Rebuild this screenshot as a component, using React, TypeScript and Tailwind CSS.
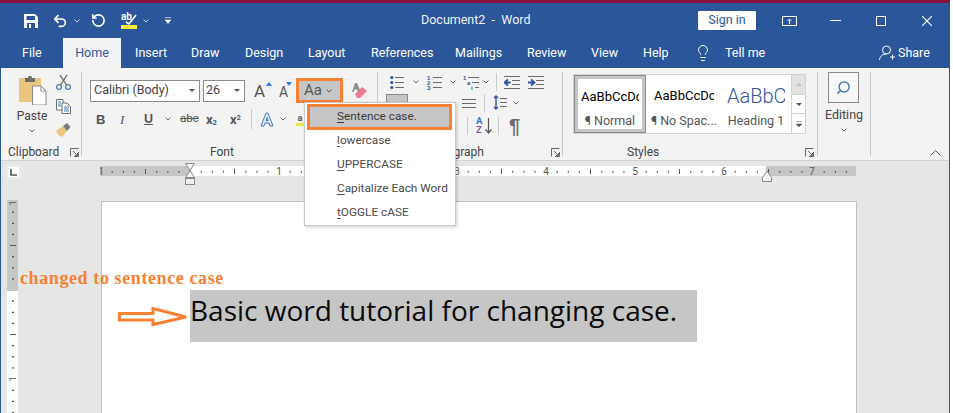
import React from "react";
import { Lightbulb, RotateCcw, Search, Undo2 } from "lucide-react";

const ORANGE = "#f58233";

function Chev({ className = "", color = "#666" }: { className?: string; color?: string }) {
  return (
    <svg width="6" height="4" viewBox="0 0 6 4" className={"shrink-0 " + className}>
      <path d="M0.5 0.5 3 3 5.5 0.5" fill="none" stroke={color} strokeWidth="1" />
    </svg>
  );
}

function Launcher({ className = "" }: { className?: string }) {
  return (
    <svg width="9" height="9" viewBox="0 0 9 9" className={"shrink-0 " + className}>
      <path d="M0.5 8.5V0.5H8.5M8.5 4V8.5H4M3 3 7.5 7.5M5 7.5H7.5V5" fill="none" stroke="#666" strokeWidth="1" />
    </svg>
  );
}

function Sep({ className = "" }: { className?: string }) {
  return <div className={"w-px bg-[#c8c8c8] shrink-0 " + className} />;
}

function GroupSep() {
  return <div className="w-px h-[84px] mt-[4px] bg-[#c6c6c6] shrink-0" />;
}

function Lines({ w = 14, n = 3, gap = 5, color = "#6a6a6a", indents = [] as number[] }) {
  const rows = Array.from({ length: n });
  return (
    <>
      {rows.map((_, i) => (
        <line key={i} x1={indents[i] ?? 0} x2={w} y1={2.5 + i * gap} y2={2.5 + i * gap} stroke={color} strokeWidth="1" />
      ))}
    </>
  );
}

function Bullets() {
  return (
    <svg width="14" height="15" viewBox="0 0 14 15" className="shrink-0">
      <circle cx="1.8" cy="2.5" r="1.6" fill="#2b579a" />
      <circle cx="1.8" cy="7.5" r="1.6" fill="#2b579a" />
      <circle cx="1.8" cy="12.5" r="1.6" fill="#2b579a" />
      <line x1="5" x2="14" y1="2.5" y2="2.5" stroke="#6a6a6a" />
      <line x1="5" x2="14" y1="7.5" y2="7.5" stroke="#6a6a6a" />
      <line x1="5" x2="14" y1="12.5" y2="12.5" stroke="#6a6a6a" />
    </svg>
  );
}

function Numbered() {
  return (
    <svg width="15" height="15" viewBox="0 0 15 15" className="shrink-0">
      <text x="0" y="5" fontSize="6" fontWeight="700" fill="#2b579a" fontFamily="Liberation Sans, sans-serif">1</text>
      <text x="0" y="10" fontSize="6" fontWeight="700" fill="#2b579a" fontFamily="Liberation Sans, sans-serif">2</text>
      <text x="0" y="15" fontSize="6" fontWeight="700" fill="#2b579a" fontFamily="Liberation Sans, sans-serif">3</text>
      <line x1="6" x2="15" y1="2.5" y2="2.5" stroke="#6a6a6a" />
      <line x1="6" x2="15" y1="7.5" y2="7.5" stroke="#6a6a6a" />
      <line x1="6" x2="15" y1="12.5" y2="12.5" stroke="#6a6a6a" />
    </svg>
  );
}

function Multi() {
  return (
    <svg width="16" height="15" viewBox="0 0 16 15" className="shrink-0">
      <text x="0" y="5" fontSize="6" fontWeight="700" fill="#2b579a" fontFamily="Liberation Sans, sans-serif">1</text>
      <text x="4" y="10" fontSize="6" fontWeight="700" fill="#2b579a" fontFamily="Liberation Sans, sans-serif">a</text>
      <text x="8" y="15" fontSize="6" fontWeight="700" fill="#2b579a" fontFamily="Liberation Sans, sans-serif">i</text>
      <line x1="5" x2="16" y1="2.5" y2="2.5" stroke="#6a6a6a" />
      <line x1="9" x2="16" y1="7.5" y2="7.5" stroke="#6a6a6a" />
      <line x1="12" x2="16" y1="12.5" y2="12.5" stroke="#6a6a6a" />
    </svg>
  );
}

function Indent({ right = false }: { right?: boolean }) {
  return (
    <svg width="16" height="13" viewBox="0 0 16 13" className="shrink-0">
      <path
        d={right ? "M0 6.5H5M3 3.5 6.5 6.5 3 9.5" : "M6.5 6.5H1.5M4 3.5 0.5 6.5 4 9.5"}
        fill="none"
        stroke="#2b579a"
        strokeWidth="1.8"
      />
      <line x1="0" x2="16" y1="0.5" y2="0.5" stroke="#6a6a6a" />
      <line x1="8" x2="16" y1="4.5" y2="4.5" stroke="#6a6a6a" />
      <line x1="8" x2="16" y1="8.5" y2="8.5" stroke="#6a6a6a" />
      <line x1="0" x2="16" y1="12.5" y2="12.5" stroke="#6a6a6a" />
    </svg>
  );
}

function HorizontalRuler() {
  const ticks: React.ReactNode[] = [];
  for (let i = -8; i <= 60; i++) {
    const x = 90 + i * 11.125;
    if (i % 8 === 0) continue;
    if (x > 755) continue;
    if (i % 4 === 0) ticks.push(<line key={i} x1={x} x2={x} y1="6" y2="11" stroke="#555" />);
    else ticks.push(<rect key={i} x={x - 0.5} y="8" width="1.2" height="1.5" fill="#444" />);
  }
  const labels = [
    { x: 1, n: 1 },
    { x: 179, n: 1 },
    { x: 268, n: 2 },
    { x: 357, n: 3 },
    { x: 446, n: 4 },
    { x: 535, n: 5 },
    { x: 624, n: 6 },
    { x: 712, n: 7 },
  ];
  return (
    <svg width="770" height="22" viewBox="0 0 770 22" className="shrink-0 ml-[79px]">
      <rect x="0" y="3" width="756" height="10" fill="#c6c6c6" />
      <rect x="90" y="3" width="576" height="10" fill="#ffffff" />
      {ticks}
      {labels.map((l, i) => (
        <text key={i} x={l.x} y="12" textAnchor="middle" fontSize="10" fill="#555" fontFamily="Roboto, sans-serif">{l.n}</text>
      ))}
      <path d="M85.5 0.5H94.5L90 7.5 94.5 14.5H85.5L90 7.5Z" fill="#f4f4f4" stroke="#8a8a8a" />
      <rect x="85.5" y="15.5" width="9" height="6" fill="#f0f0f0" stroke="#8a8a8a" />
      <path d="M667 8 671.5 14.5V18.5H662.5V14.5Z" fill="#f4f4f4" stroke="#8a8a8a" />
    </svg>
  );
}

function VerticalRuler() {
  const ticks: React.ReactNode[] = [];
  for (let i = -8; i <= 11; i++) {
    const y = 90 + i * 11.125;
    if (i % 8 === 0) continue;
    if (i % 4 === 0) ticks.push(<line key={i} x1="3" x2="9" y1={y} y2={y} stroke="#555" />);
    else ticks.push(<rect key={i} x="5" y={y - 0.5} width="2" height="1.2" fill="#444" />);
  }
  return (
    <svg width="11" height="213" viewBox="0 0 11 213" className="shrink-0 ml-[6px] -mt-px">
      <rect width="11" height="91" fill="#c6c6c6" />
      <rect y="91" width="11" height="122" fill="#ffffff" />
      {ticks}
      <text x="0" y="0" transform="translate(9 3) rotate(-90)" textAnchor="middle" fontSize="9" fill="#555" fontFamily="Roboto, sans-serif">1</text>
      <text x="0" y="0" transform="translate(9 179) rotate(-90)" textAnchor="middle" fontSize="9" fill="#555" fontFamily="Roboto, sans-serif">1</text>
    </svg>
  );
}

const tabs: { t: string; c: string }[] = [
  { t: "Insert", c: "ml-[14px] w-[29px]" },
  { t: "Draw", c: "ml-[27px] w-[27px]" },
  { t: "Design", c: "ml-[27px] w-[36px]" },
  { t: "Layout", c: "ml-[27px] w-[36px]" },
  { t: "References", c: "ml-[27px] w-[57px]" },
  { t: "Mailings", c: "ml-[27px] w-[45px]" },
  { t: "Review", c: "ml-[27px] w-[37px]" },
  { t: "View", c: "ml-[27px] w-[26px]" },
  { t: "Help", c: "ml-[26px] w-[25px]" },
];

function MenuItem({ first, rest }: { first: string; rest: string }) {
  return (
    <div className="h-[24px] pl-[32px] flex items-center text-[11.8px] text-[#4a4a4a] whitespace-nowrap">
      <span className="underline underline-offset-2">{first}</span>
      <span>{rest}</span>
    </div>
  );
}

export default function App() {
  return (
    <div className="relative w-[953px] h-[413px] overflow-hidden bg-white font-['Roboto',sans-serif] text-[#444]">
      <div className="w-[950px] h-[413px] flex flex-col">
        <div className="h-[3px] bg-[#8a1040] shrink-0" />
        <div className="flex-1 flex flex-col border-x border-[#2b579a] min-h-0">
          {/* title bar */}
          <div className="h-[35px] bg-[#2b579a] flex items-center text-white shrink-0 pl-[23px]">
            <svg width="14" height="14" viewBox="0 0 14 14" className="shrink-0">
              <path d="M0 0H11L14 3V14H0Z" fill="#fff" />
              <rect x="2.5" y="2" width="8.5" height="4" fill="#2b579a" />
              <rect x="3" y="9" width="8" height="5" fill="#2b579a" />
              <rect x="5" y="10" width="2" height="4" fill="#fff" />
            </svg>
            <Undo2 size={16} strokeWidth={2.6} color="#fff" className="ml-[14px] shrink-0" />
            <Chev color="#c6d4ea" className="ml-[6px]" />
            <RotateCcw size={15} strokeWidth={2.6} color="#fff" className="ml-[11px] shrink-0" />
            <div className="relative w-[16px] h-[16px] ml-[15px] shrink-0">
              <span className="absolute left-0 -top-[2px] text-[10px] leading-[12px] font-semibold text-white">ab</span>
              <svg width="16" height="16" viewBox="0 0 16 16" className="absolute left-0 top-0">
                <path d="M5 9 8 11 15 2" fill="none" stroke="#fff" strokeWidth="1.6" />
                <rect x="0" y="12" width="16" height="4" fill="#ffee33" />
              </svg>
            </div>
            <Chev color="#c6d4ea" className="ml-[6px]" />
            <svg width="6" height="7" viewBox="0 0 6 7" className="shrink-0 ml-[16px]">
              <path d="M0 0.5H6M0 3H6L3 6.5Z" fill="#fff" stroke="#fff" strokeWidth="0.6" />
            </svg>
            <div className="ml-[250px] w-[108px] text-[12.5px] whitespace-pre text-white/95">Document2  -  Word</div>
            <div className="ml-[169px] w-[58px] h-[19px] bg-white rounded-[1px] flex items-center justify-center text-[12.5px] text-[#2b579a] shrink-0">Sign in</div>
            <svg width="15" height="11" viewBox="0 0 15 11" className="ml-[26px] shrink-0">
              <rect x="0.5" y="1.5" width="14" height="9" fill="none" stroke="#fff" />
              <path d="M0 1.5H15M7.5 9V4.5M5.5 6 7.5 4 9.5 6" fill="none" stroke="#fff" />
            </svg>
            <div className="ml-[33px] w-[11px] h-px bg-white shrink-0" />
            <div className="ml-[35px] w-[10px] h-[10px] border border-white shrink-0" />
            <svg width="10" height="10" viewBox="0 0 10 10" className="ml-[36px] shrink-0">
              <path d="M0 0 10 10M10 0 0 10" stroke="#fff" strokeWidth="1.1" />
            </svg>
          </div>

          {/* tabs */}
          <div className="h-[30px] bg-[#2b579a] flex items-center text-[12.5px] text-white shrink-0 whitespace-nowrap">
            <div className="ml-[21px] w-[18px]">File</div>
            <div className="ml-[23px] w-[58px] h-[30px] bg-[#f3f3f3] flex items-center justify-center text-[#2b579a]">Home</div>
            {tabs.map((x) => (
              <div key={x.t} className={x.c}>{x.t}</div>
            ))}
            <Lightbulb size={18} strokeWidth={1.3} color="#fff" className="ml-[26px] shrink-0" />
            <div className="ml-[13px] w-[38px]">Tell me</div>
            <svg width="16" height="16" viewBox="0 0 16 16" className="ml-[116px] shrink-0">
              <circle cx="7.5" cy="5" r="4" fill="none" stroke="#fff" />
              <path d="M0.5 15C1 11 3.5 9 7.5 9M11 12H16M13.5 9.5V14.5" fill="none" stroke="#fff" />
            </svg>
            <div className="ml-[3px] w-[29px]">Share</div>
          </div>

          {/* ribbon */}
          <div className="h-[93px] bg-[#f3f3f3] border-b border-[#d2d2d2] flex shrink-0 text-[12px]">
            {/* Clipboard */}
            <div className="w-[80px] flex flex-col shrink-0">
              <div className="h-[76px] flex pl-[16px]">
                <div className="w-[30px] flex flex-col items-center">
                  <svg width="29" height="30" viewBox="0 0 29 30" className="mt-[7px] shrink-0">
                    <rect x="1" y="3" width="22" height="24" rx="1" fill="#e9c57f" />
                    <path d="M7 3H10C10 0 14 0 14 3H17V7H7Z" fill="#6e6e6e" />
                    <path d="M14.5 11H23L28 16V30H14.5Z" fill="#fff" stroke="#8a8a8a" />
                    <path d="M23 11V16H28" fill="none" stroke="#8a8a8a" />
                  </svg>
                  <div className="mt-[3px] leading-[16px]">Paste</div>
                  <Chev className="mt-[5px]" />
                </div>
                <div className="ml-[8px] flex flex-col items-center w-[16px]">
                  <svg width="15" height="15" viewBox="0 0 15 15" className="mt-[7px] shrink-0">
                    <circle cx="3" cy="12" r="2.4" fill="none" stroke="#4d7bb3" strokeWidth="1.2" />
                    <circle cx="12" cy="12" r="2.4" fill="none" stroke="#4d7bb3" strokeWidth="1.2" />
                    <path d="M4.5 10 11 0M10.5 10 4 0" stroke="#6a6a6a" strokeWidth="1.3" />
                  </svg>
                  <svg width="15" height="15" viewBox="0 0 15 15" className="mt-[9px] shrink-0">
                    <path d="M0.5 0.5H7V11H0.5Z" fill="#fff" stroke="#6a6a6a" />
                    <path d="M6 4H11L14.5 7.5V14.5H6Z" fill="#fff" stroke="#6a6a6a" />
                    <path d="M8 8H13M8 10H13M8 12H13M2 3H5M2 5H5M2 7H5" stroke="#4d7bb3" />
                  </svg>
                  <svg width="15" height="15" viewBox="0 0 15 15" className="mt-[8px] shrink-0">
                    <path d="M0 9 7 4 11 9 6 15C3 14 1 12 0 9Z" fill="#e9c57f" />
                    <path d="M7 4 11 1 14.5 5 11 9Z" fill="#7a7a7a" />
                  </svg>
                </div>
              </div>
              <div className="h-[16px] flex items-center pl-[7px]">
                <span className="w-[50px] whitespace-nowrap">Clipboard</span>
                <Launcher className="ml-[12px]" />
              </div>
            </div>
            <GroupSep />

            {/* Font */}
            <div className="w-[295px] flex flex-col shrink-0">
              <div className="h-[76px] pl-[8px] flex flex-col">
                <div className="flex items-center mt-[10px] h-[25px]">
                  <div className="w-[110px] h-[22px] bg-white border border-[#8a8a8a] flex items-center pl-[3px] pr-[4px] justify-between shrink-0 text-[12.5px]">
                    <span>Calibri (Body)</span>
                    <svg width="6" height="3" viewBox="0 0 6 3"><path d="M0 0H6L3 3Z" fill="#555" /></svg>
                  </div>
                  <div className="ml-[3px] w-[42px] h-[22px] bg-white border border-[#8a8a8a] flex items-center pl-[2px] pr-[4px] justify-between shrink-0 text-[12.5px]">
                    <span>26</span>
                    <svg width="6" height="3" viewBox="0 0 6 3"><path d="M0 0H6L3 3Z" fill="#555" /></svg>
                  </div>
                  <div className="ml-[9px] w-[18px] relative text-[17px] leading-[18px] shrink-0 text-[#555]">
                    A
                    <svg width="6" height="4" viewBox="0 0 6 4" className="absolute right-0 top-0"><path d="M0 4 3 0 6 4Z" fill="#2b7cd3" /></svg>
                  </div>
                  <div className="ml-[7px] w-[12px] relative text-[14px] leading-[16px] pt-[2px] shrink-0 text-[#555]">
                    A
                    <svg width="6" height="4" viewBox="0 0 6 4" className="absolute -right-[1px] top-0"><path d="M0 0 3 4 6 0Z" fill="#2b7cd3" /></svg>
                  </div>
                  <div className="ml-[5px] w-[47px] h-[25px] border-[3px] border-[#f58233] bg-[#c6c6c6] flex items-center pl-[5px] shrink-0 text-[15px] text-[#555]">
                    <span>Aa</span>
                    <Chev className="ml-[4px]" color="#555" />
                  </div>
                  <svg width="15" height="16" viewBox="0 0 15 16" className="ml-[9px] shrink-0">
                    <path d="M3 11 10 4 15 8 8 15H5Z" fill="#ef7c8e" />
                    <path d="M3 0H5L8 7 6 9 5.2 6.5H2.5L1.6 9H0Z" fill="#8f8f8f" />
                  </svg>
                </div>
                <div className="flex items-center mt-[8px] h-[16px] leading-none">
                  <span className="ml-[6px] w-[10px] font-bold text-[13px] text-[#555] font-['Liberation_Sans',sans-serif]">B</span>
                  <span className="ml-[14px] w-[8px] italic text-[13px] text-[#555] font-['Liberation_Serif',serif]">I</span>
                  <span className="ml-[16px] w-[9px] font-bold underline text-[12.5px] text-[#555] font-['Liberation_Sans',sans-serif]">U</span>
                  <Chev className="ml-[12px]" />
                  <span className="ml-[9px] w-[17px] line-through text-[11.5px] text-[#555]">abc</span>
                  <span className="ml-[9px] w-[14px] font-bold text-[13px] text-[#555]">x<sub className="text-[7px] text-[#2b579a]">2</sub></span>
                  <span className="ml-[10px] w-[13px] font-bold text-[13px] text-[#555]">x<sup className="text-[7px]">2</sup></span>
                  <Sep className="ml-[8px] h-[20px]" />
                  <svg width="14" height="15" viewBox="0 0 14 15" className="ml-[8px] shrink-0">
                    <path d="M1 14 6 1H8L13 14H10L9 11H5L4 14ZM6 8.5H8L7 5.5Z" fill="#dbe8f7" stroke="#4d7bb3" strokeWidth="1" />
                  </svg>
                  <Chev className="ml-[6px]" />
                  <div className="ml-[10px] w-[8px] flex flex-col items-center shrink-0">
                    <span className="font-bold text-[9px] leading-[10px] text-[#555]">a</span>
                    <span className="w-[8px] h-[3px] bg-[#f2e63a]" />
                  </div>
                </div>
              </div>
              <div className="h-[16px] flex items-center pl-[128px]">
                <span>Font</span>
              </div>
            </div>
            <GroupSep />

            {/* Paragraph */}
            <div className="w-[184px] flex flex-col shrink-0">
              <div className="h-[76px] flex flex-col">
                <div className="flex items-center h-[16px] mt-[6px]">
                  <div className="ml-[12px]"><Bullets /></div>
                  <Chev className="ml-[9px]" />
                  <div className="ml-[8px]"><Numbered /></div>
                  <Chev className="ml-[8px]" />
                  <div className="ml-[7px]"><Multi /></div>
                  <Chev className="ml-[4px]" />
                  <Sep className="ml-[7px] h-[18px]" />
                  <div className="ml-[7px]"><Indent /></div>
                  <div className="ml-[8px]"><Indent right /></div>
                </div>
                <div className="flex items-center h-[17px] mt-[4px]">
                  <div className="ml-[8px] w-[22px] h-[17px] bg-[#c6c6c6] border border-[#8a8a8a] shrink-0" />
                  <svg width="14" height="11" viewBox="0 0 14 11" className="ml-[54px] shrink-0"><Lines w={14} n={3} gap={4} /></svg>
                  <Sep className="ml-[8px] h-[18px]" />
                  <svg width="14" height="15" viewBox="0 0 14 15" className="ml-[8px] shrink-0">
                    <path d="M3 1V14M1 3 3 1 5 3M1 12 3 14 5 12" fill="none" stroke="#2b579a" strokeWidth="1.4" />
                    <path d="M7 3.5H14M7 7.5H14M7 11.5H14" stroke="#6a6a6a" />
                  </svg>
                  <Chev className="ml-[6px]" />
                </div>
                <div className="flex items-center h-[18px] mt-[6px]">
                  <Sep className="ml-[89px] h-[18px]" />
                  <div className="ml-[8px] w-[16px] relative h-[18px] shrink-0">
                    <span className="absolute left-0 -top-[1px] text-[9.5px] leading-[9px] font-bold text-[#2b7cd3]">A</span>
                    <span className="absolute left-0 top-[8px] text-[9.5px] leading-[9px] font-bold text-[#8a4fb5]">Z</span>
                    <svg width="7" height="16" viewBox="0 0 7 16" className="absolute right-0 top-[1px]">
                      <path d="M3.5 0V15M0.5 11.5 3.5 15 6.5 11.5" fill="none" stroke="#555" strokeWidth="1.2" />
                    </svg>
                  </div>
                  <Sep className="ml-[6px] h-[18px]" />
                  <span className="ml-[10px] text-[20px] leading-[18px] font-['Liberation_Sans',sans-serif] font-bold text-[#6a6a6a]">¶</span>
                </div>
              </div>
              <div className="h-[16px] flex items-center pl-[51px]">
                <span className="w-[54px]">Paragraph</span>
                <Launcher className="ml-[68px]" />
              </div>
            </div>
            <GroupSep />

            {/* Styles */}
            <div className="w-[254px] flex flex-col shrink-0">
              <div className="h-[76px]">
                <div className="mt-[6px] ml-[10px] w-[233px] h-[60px] bg-white border border-[#d2d2d2] flex">
                  <div className="w-[72px] h-[58px] border border-[#8a8a8a] shrink-0">
                    <div className="h-full border-[3px] border-[#c6c6c6] flex flex-col items-center">
                      <div className="w-[58px] overflow-hidden whitespace-nowrap text-[13px] leading-[18px] mt-[9px] text-black">AaBbCcDcEe</div>
                      <div className="text-[12.5px] leading-[16px] mt-[8px] text-[#555] whitespace-nowrap">¶ Normal</div>
                    </div>
                  </div>
                  <div className="w-[76px] flex flex-col items-center shrink-0">
                    <div className="w-[60px] overflow-hidden whitespace-nowrap text-[13px] leading-[18px] mt-[12px] text-black">AaBbCcDcEe</div>
                    <div className="text-[12.5px] leading-[16px] mt-[8px] text-[#555] whitespace-nowrap">¶ No Spac...</div>
                  </div>
                  <div className="w-[68px] flex flex-col items-center shrink-0">
                    <div className="w-[58px] overflow-hidden whitespace-nowrap text-[20px] font-light leading-[24px] mt-[9px] text-[#2f5496]">AaBbCcDd</div>
                    <div className="text-[12.5px] leading-[16px] mt-[5px] text-[#555] whitespace-nowrap">Heading 1</div>
                  </div>
                  <div className="ml-auto w-[14px] flex flex-col shrink-0 border-l border-[#d2d2d2]">
                    <div className="h-[20px] bg-[#e2e2e2] flex items-center justify-center border-b border-[#d2d2d2]">
                      <svg width="6" height="3" viewBox="0 0 6 3"><path d="M0 3H6L3 0Z" fill="#c0c0c0" /></svg>
                    </div>
                    <div className="h-[19px] flex items-center justify-center border-b border-[#d2d2d2]">
                      <svg width="6" height="3" viewBox="0 0 6 3"><path d="M0 0H6L3 3Z" fill="#555" /></svg>
                    </div>
                    <div className="flex-1 flex items-center justify-center">
                      <svg width="6" height="6" viewBox="0 0 6 6"><path d="M0 0.5H6M0 3H6L3 6Z" fill="#555" stroke="#555" strokeWidth="0.5" /></svg>
                    </div>
                  </div>
                </div>
              </div>
              <div className="h-[16px] flex items-center pl-[64px]">
                <span className="w-[30px]">Styles</span>
                <Launcher className="ml-[148px]" />
              </div>
            </div>
            <GroupSep />

            {/* Editing */}
            <div className="w-[52px] flex flex-col items-center shrink-0">
              <div className="mt-[4px] ml-[-1px] w-[31px] h-[31px] border border-[#8a8a8a] bg-[#f7f7f7] flex items-center justify-center">
                <Search size={15} strokeWidth={2.4} color="#4d7bb3" className="-scale-x-100" />
              </div>
              <div className="mt-[4px] leading-[16px] text-[12.5px] whitespace-nowrap">Editing</div>
              <Chev className="mt-[5px]" />
            </div>
            <GroupSep />
            <div className="flex-1 flex items-end justify-end pr-[8px] pb-[4px]">
              <svg width="11" height="6" viewBox="0 0 11 6"><path d="M0.5 5.5 5.5 0.5 10.5 5.5" fill="none" stroke="#555" /></svg>
            </div>
          </div>

          {/* document area */}
          <div className="flex-1 bg-[#e6e6e6] flex flex-col min-h-0">
            <div className="h-[40px] flex shrink-0 pt-[2px]">
              <div className="ml-[5px] mt-[2px] w-[15px] h-[14px] bg-white border-[2px] border-[#ececec] flex items-center justify-center shrink-0">
                <svg width="7" height="7" viewBox="0 0 7 7"><path d="M1 0V6H7" fill="none" stroke="#555" strokeWidth="1.6" /></svg>
              </div>
              <HorizontalRuler />
            </div>
            <div className="flex-1 flex min-h-0">
              <VerticalRuler />
              <div className="ml-[83px] w-[756px] bg-white border-x border-t border-[#c0c0c0] pt-[88px] pl-[88px] min-h-0 shrink-0">
                <div className="w-[507px] h-[52px] bg-[#c6c6c6] text-[28px] leading-[41px] text-[#0a0a0a] whitespace-nowrap font-['Open_Sans',sans-serif]">
                  Basic word tutorial for changing case.
                </div>
              </div>
            </div>
          </div>
        </div>
      </div>

      {/* dropdown overlay */}
      <div className="absolute left-[304px] top-[102px] w-[152px] h-[124px] bg-white border border-[#c8c8c8] shadow-[1px_1px_3px_rgba(0,0,0,0.2)] pt-[2px]">
        <div className="mx-[2px] -mb-px h-[26px] -mt-px w-[145px] border-[3px] border-[#f58233] bg-[#c6c6c6] flex items-center pl-[27px] text-[11.8px] text-[#3a3a3a] whitespace-nowrap">
          <span className="underline underline-offset-2">S</span>
          <span>entence case.</span>
        </div>
        <MenuItem first="l" rest="owercase" />
        <MenuItem first="U" rest="PPERCASE" />
        <MenuItem first="C" rest="apitalize Each Word" />
        <MenuItem first="t" rest="OGGLE cASE" />
      </div>

      {/* annotation */}
      <div className="absolute left-[20px] top-[268px] text-[18px] leading-[20px] font-bold tracking-[0.6px] font-['Liberation_Serif',serif] text-[#f58233] whitespace-nowrap">
        changed to sentence case
      </div>
      <svg width="74" height="22" viewBox="0 0 74 22" className="absolute left-[117px] top-[306px]">
        <path d="M2.5 7.5H36V2.5L69 11 36 18.5V14H2.5Z" fill="#fff" stroke={ORANGE} strokeWidth="3" />
      </svg>
    </div>
  );
}
